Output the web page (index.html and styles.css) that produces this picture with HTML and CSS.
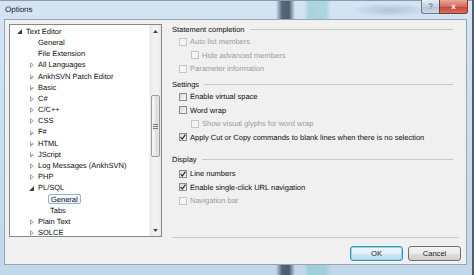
FILE: index.html
```html
<!DOCTYPE html>
<html lang="en">
<head>
    <meta charset="UTF-8">
    <title>Options</title>
    <link rel="stylesheet" href="styles.css">
</head>
<body>
<div class="window">
    <div class="titlebar">
        <span class="title">Options</span>
        <div class="caption">
            <span class="cap-help">?</span>
            <span class="cap-close">x</span>
        </div>
    </div>

    <div class="client">
        <div class="top">
            <div class="tree">
                <div class="tree-list">
                    <div class="node l0"><span class="tw exp"></span>Text Editor</div>
                    <div class="node l1"><span class="tw"></span>General</div>
                    <div class="node l1"><span class="tw"></span>File Extension</div>
                    <div class="node l1"><span class="tw col"></span>All Languages</div>
                    <div class="node l1"><span class="tw col"></span>AnkhSVN Patch Editor</div>
                    <div class="node l1"><span class="tw col"></span>Basic</div>
                    <div class="node l1"><span class="tw col"></span>C#</div>
                    <div class="node l1"><span class="tw col"></span>C/C++</div>
                    <div class="node l1"><span class="tw col"></span>CSS</div>
                    <div class="node l1"><span class="tw col"></span>F#</div>
                    <div class="node l1"><span class="tw col"></span>HTML</div>
                    <div class="node l1"><span class="tw col"></span>JScript</div>
                    <div class="node l1"><span class="tw col"></span>Log Messages (AnkhSVN)</div>
                    <div class="node l1"><span class="tw col"></span>PHP</div>
                    <div class="node l1"><span class="tw exp"></span>PL/SQL</div>
                    <div class="node l2"><span class="tw"></span><span class="selected">General</span></div>
                    <div class="node l2"><span class="tw"></span>Tabs</div>
                    <div class="node l1"><span class="tw col"></span>Plain Text</div>
                    <div class="node l1"><span class="tw col"></span>SOLCE</div>
                </div>
                <div class="vscroll">
                    <div class="sb-btn">
                        <svg width="5" height="3" viewBox="0 0 5 3"><path d="M0 3 L2.5 0 L5 3 Z" fill="#4a4a4a"/></svg>
                    </div>
                    <div class="sb-gap"></div>
                    <div class="sb-thumb"><span class="grip"></span></div>
                    <div class="sb-fill"></div>
                    <div class="sb-btn">
                        <svg width="5" height="3" viewBox="0 0 5 3"><path d="M0 0 L2.5 3 L5 0 Z" fill="#4a4a4a"/></svg>
                    </div>
                </div>
            </div>

            <div class="page">
                <div class="group-head first"><span>Statement completion</span><span class="rule"></span></div>
                <div class="opt"><span class="cb off"></span><span class="dim">Auto list members</span></div>
                <div class="opt sub"><span class="cb off"></span><span class="dim">Hide advanced members</span></div>
                <div class="opt"><span class="cb off"></span><span class="dim">Parameter information</span></div>

                <div class="group-head"><span>Settings</span><span class="rule"></span></div>
                <div class="opt"><span class="cb"></span>Enable virtual space</div>
                <div class="opt"><span class="cb"></span>Word wrap</div>
                <div class="opt sub"><span class="cb off"></span><span class="dim">Show visual glyphs for word wrap</span></div>
                <div class="opt"><span class="cb on"><svg width="6" height="6" viewBox="0 0 6 6"><path d="M0.6 3.2 L2.3 5 L5.4 0.6" fill="none" stroke="#2b2b2b" stroke-width="1.2"/></svg></span>Apply Cut or Copy commands to blank lines when there is no selection</div>

                <div class="group-head display"><span>Display</span><span class="rule"></span></div>
                <div class="opt first-opt"><span class="cb on"><svg width="6" height="6" viewBox="0 0 6 6"><path d="M0.6 3.2 L2.3 5 L5.4 0.6" fill="none" stroke="#2b2b2b" stroke-width="1.2"/></svg></span>Line numbers</div>
                <div class="opt"><span class="cb on"><svg width="6" height="6" viewBox="0 0 6 6"><path d="M0.6 3.2 L2.3 5 L5.4 0.6" fill="none" stroke="#2b2b2b" stroke-width="1.2"/></svg></span>Enable single-click URL navigation</div>
                <div class="opt"><span class="cb off"></span><span class="dim">Navigation bar</span></div>
            </div>
        </div>

        <div class="footer">
            <div class="separator"></div>
            <div class="buttons">
                <button class="btn default">OK</button>
                <button class="btn">Cancel</button>
            </div>
        </div>
    </div>
</div>
</body>
</html>
```

FILE: styles.css
```css
* {
    box-sizing: border-box;
}
body {
    margin: 0;
    width: 474px;
    height: 275px;
    overflow: hidden;
    font-family: "Liberation Sans", Arial, sans-serif;
    font-size: 7.5px;
    color: #0e0e0e;
    text-rendering: geometricPrecision;
}
.window {
    height: 275px;
    display: flex;
    flex-direction: column;
    background:
        linear-gradient(90deg, transparent 276px, rgba(55, 70, 90, .8) 282px, rgba(55, 70, 90, .85) 289px, transparent 295px,
            transparent 304px, rgba(110, 195, 195, .45) 309px, rgba(110, 195, 195, .4) 326px, transparent 331px),
        linear-gradient(180deg, #d5e4f3, #c2d7ec);
    box-shadow: inset -2px 0 0 #4d5b6b, inset 0 1px 0 #8a9bb0;
}

/* title bar */
.titlebar {
    height: 19px;
    display: flex;
    padding-left: 5px;
    background: radial-gradient(ellipse 40px 7px at 390px 10px, rgba(100, 130, 175, .35), transparent);
}
.title {
    font-size: 8px;
    line-height: 19px;
    color: #1a1a1a;
}
.caption {
    margin-left: auto;
    margin-right: 6px;
    display: flex;
    align-self: flex-start;
}
.cap-help, .cap-close {
    height: 14px;
    display: flex;
    align-items: center;
    justify-content: center;
    border: 1px solid #6d7c8e;
    border-top: none;
    font-size: 8px;
}
.cap-help {
    width: 18px;
    border-right: none;
    border-radius: 0 0 0 3px;
    color: #3a4a5c;
    background: linear-gradient(180deg, #e4ecf5, #c5d2e0 50%, #b4c3d4 51%, #cdd9e6);
}
.cap-close {
    width: 29px;
    border-color: #7c3a35;
    border-radius: 0 0 3px 0;
    color: #fff;
    font-weight: bold;
    background: linear-gradient(180deg, #e8a79c, #d26c5f 50%, #c4453a 51%, #d76f5e);
}

/* client area */
.client {
    flex: 1;
    margin: 0 7px 10px 4px;
    display: flex;
    flex-direction: column;
    background: #f0f0f0;
    border: 1px solid #98a6b4;
}
.top {
    height: 217px;
    display: flex;
}

/* tree */
.tree {
    width: 153px;
    height: 213px;
    margin: 4px 0 0 4px;
    display: flex;
    border: 1px solid #828790;
    background: #fff;
}
.tree-list {
    flex: 1;
    overflow: hidden;
    padding-top: 0.8px;
}
.node {
    height: 11.2px;
    line-height: 11.2px;
    display: flex;
    align-items: center;
    white-space: nowrap;
}
.l0 { padding-left: 7px; }
.l1 { padding-left: 19px; }
.l2 { padding-left: 31px; }
.tw {
    width: 9px;
    height: 11px;
    flex: none;
    position: relative;
}
.tw.col::before {
    content: "";
    position: absolute;
    left: 1px;
    top: 3px;
    border-left: 4px solid #a6a6a6;
    border-top: 3px solid transparent;
    border-bottom: 3px solid transparent;
}
.tw.col::after {
    content: "";
    position: absolute;
    left: 2px;
    top: 4.5px;
    border-left: 2px solid #fff;
    border-top: 1.5px solid transparent;
    border-bottom: 1.5px solid transparent;
}
.tw.exp::before {
    content: "";
    position: absolute;
    left: 0;
    top: 3px;
    border-right: 5px solid #3c3c3c;
    border-top: 5px solid transparent;
}
.selected {
    margin-left: -2px;
    padding: 0 2px;
    height: 10px;
    line-height: 9px;
    border: 1px solid #8fb2d6;
    border-radius: 2px;
    background: linear-gradient(180deg, #fafcfe, #edf3fa);
}

/* scrollbar */
.vscroll {
    width: 12px;
    display: flex;
    flex-direction: column;
    background: linear-gradient(90deg, #e6e6e6, #f2f2f2 30%, #f2f2f2 70%, #e8e8e8);
    border-left: 1px solid #f4f4f4;
}
.sb-btn {
    height: 12px;
    display: flex;
    align-items: center;
    justify-content: center;
}
.sb-gap {
    height: 58px;
}
.sb-thumb {
    height: 62px;
    margin: 0 1px;
    display: flex;
    align-items: center;
    justify-content: center;
    border: 1px solid #9b9b9b;
    border-radius: 2px;
    background: linear-gradient(90deg, #f7f7f7, #ececec 45%, #dcdcdc 55%, #e4e4e4);
}
.grip {
    width: 5px;
    height: 5px;
    background: repeating-linear-gradient(180deg, #7a7a7a 0 1px, transparent 1px 2px);
}
.sb-fill {
    flex: 1;
}

/* options page */
.page {
    flex: 1;
    margin: 0 13px 0 10px;
    padding-top: 3px;
}
.group-head {
    height: 12px;
    display: flex;
    align-items: center;
    gap: 5px;
    margin-top: 2.5px;
    white-space: nowrap;
}
.group-head.first {
    margin-top: 0;
}
.group-head.display {
    margin-top: 9px;
}
.rule {
    flex: 1;
    height: 1px;
    background: #c9c9c9;
}
.opt {
    height: 13.5px;
    display: flex;
    align-items: center;
    gap: 3px;
    padding-left: 7px;
    white-space: nowrap;
}
.opt.sub {
    padding-left: 19px;
}
.opt.first-opt {
    margin-top: 2px;
}
.cb {
    width: 8px;
    height: 8px;
    flex: none;
    display: flex;
    align-items: center;
    justify-content: center;
    border: 1px solid #8c8c8c;
    background: linear-gradient(135deg, #d6d6d6, #f9f9f9);
}
.cb.off {
    border-color: #c6c6c6;
    background: #f5f5f5;
}
.dim {
    color: #9c9c9c;
}

/* footer */
.separator {
    height: 1px;
    margin: 0 7px 0 167px;
    background: #cbcbcb;
}
.buttons {
    display: flex;
    justify-content: flex-end;
    gap: 5px;
    margin-top: 8px;
    padding-right: 5px;
}
.btn {
    width: 53px;
    height: 15px;
    padding: 0;
    font-family: inherit;
    font-size: 7.6px;
    color: #1e1e1e;
    border: 1px solid #707070;
    border-radius: 3px;
    background: linear-gradient(180deg, #f2f2f2, #ebebeb 50%, #dddddd 51%, #cfcfcf);
}
.btn.default {
    border-color: #3c8fb6;
    box-shadow: inset 0 0 0 1px #8fd6ef;
    background: linear-gradient(180deg, #eef7fc, #e2eff8 50%, #cfe6f4 51%, #c1dcee);
}
```
